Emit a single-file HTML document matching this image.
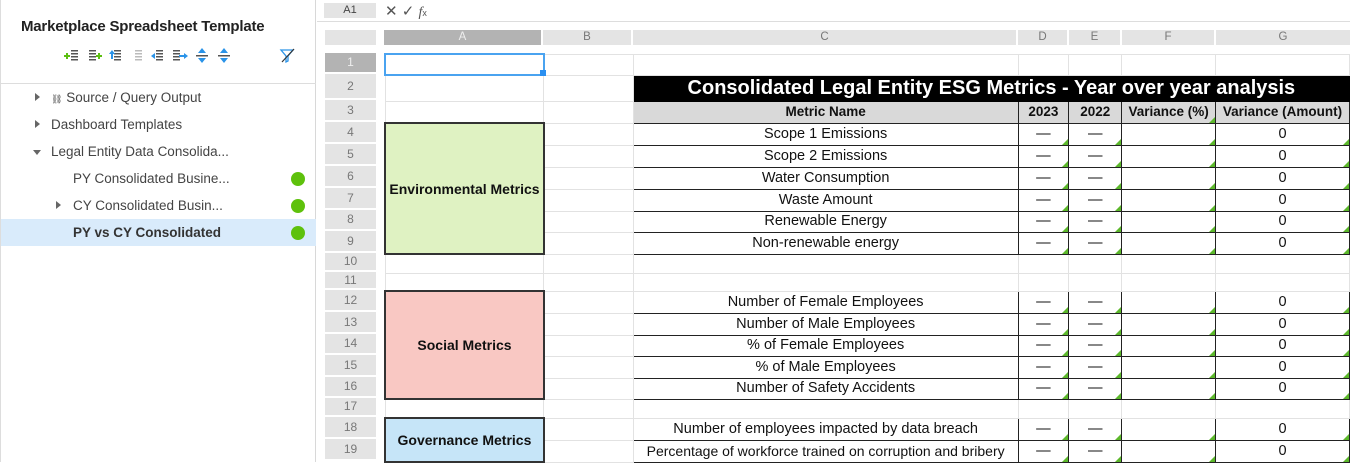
<!DOCTYPE html>
<html><head><meta charset="utf-8"><style>
*{margin:0;padding:0;box-sizing:border-box}
body{width:1350px;height:462px;overflow:hidden;background:#fff;font-family:"Liberation Sans",sans-serif;position:relative;color:#111}
.abs{position:absolute}
#side{left:0;top:0;width:316px;height:462px;border-right:1px solid #d8d8d8;border-left:1px solid #ddd}
.tr{position:absolute;font-size:13.5px;color:#444;white-space:nowrap}
.dot{position:absolute;left:290px;width:14px;height:14px;border-radius:50%;background:#5ec10c}
.car{position:absolute;width:0;height:0}
.rh{position:absolute;left:325px;width:51px;background:#e4e4e4;color:#777;font-size:12px;text-align:center;border-bottom:2px solid #fff}
.ch{position:absolute;top:30px;height:15px;background:#e4e4e4;color:#777;font-size:11.5px;text-align:center;line-height:15px;border-right:2px solid #fff}
table{position:absolute;left:384px;top:53px;border-collapse:collapse;table-layout:fixed}
td{border:1px solid #e2e2e2;font-size:14.5px;text-align:center;padding:0;white-space:nowrap;overflow:hidden;position:relative;line-height:1}
td.b{border:1px solid #222}
td.h{background:#d9d9d9;font-weight:bold;border:1px solid #222;font-size:13.5px}
td.t{background:#000;color:#fff;font-weight:bold;font-size:20px;border:1px solid #000}
td.g{background:#dff2c2;border:2px solid #333;font-weight:bold;font-size:14px}
td.p{background:#f9c8c3;border:2px solid #333;font-weight:bold;font-size:14px}
td.u{background:#c6e5f8;border:2px solid #333;font-weight:bold;font-size:14px}
td.k::after{content:"";position:absolute;right:0;bottom:0;border-left:6px solid transparent;border-bottom:6px solid #5cb82b}
</style></head><body>
<div id="side" class="abs">
<div class="abs" style="left:20px;top:18px;font-size:15px;color:#222;font-weight:bold;letter-spacing:-0.2px">Marketplace Spreadsheet Template</div>
<svg class="abs" style="left:62px;top:47px" width="240" height="18" viewBox="0 0 240 18">
<g fill="#555">
<rect x="8" y="3" width="7" height="1.5"/><rect x="8" y="6" width="7" height="1.5"/><rect x="8" y="9" width="7" height="1.5"/><rect x="8" y="12" width="7" height="1.5"/>
<rect x="26" y="3" width="7" height="1.5"/><rect x="26" y="6" width="7" height="1.5"/><rect x="26" y="9" width="7" height="1.5"/><rect x="26" y="12" width="7" height="1.5"/>
<rect x="51" y="3" width="7" height="1.5"/><rect x="51" y="6" width="7" height="1.5"/><rect x="51" y="9" width="7" height="1.5"/><rect x="51" y="12" width="7" height="1.5"/>
<rect x="93" y="3" width="7" height="1.5"/><rect x="93" y="6" width="7" height="1.5"/><rect x="93" y="9" width="7" height="1.5"/><rect x="93" y="12" width="7" height="1.5"/>
<rect x="110" y="3" width="7" height="1.5"/><rect x="110" y="6" width="7" height="1.5"/><rect x="110" y="9" width="7" height="1.5"/><rect x="110" y="12" width="7" height="1.5"/>
<rect x="133" y="8" width="12" height="1.5"/><rect x="155" y="8" width="12" height="1.5"/>
</g>
<g fill="#bbb"><rect x="72" y="3" width="7" height="1.5"/><rect x="72" y="6" width="7" height="1.5"/><rect x="72" y="9" width="7" height="1.5"/><rect x="72" y="12" width="7" height="1.5"/></g>
<g fill="#5cbf12"><rect x="1" y="8" width="6" height="2"/><rect x="3" y="6" width="2" height="6"/><rect x="33" y="8" width="6" height="2"/><rect x="35" y="6" width="2" height="6"/></g>
<g fill="#2a93e8"><path d="M46 7l3-4 3 4z"/><rect x="48" y="7" width="2" height="5"/><path d="M88 9l4-3v6z"/><path d="M125 9l-4-3v6z"/><rect x="116" y="8" width="6" height="2"/><path d="M135 6l4-5 4 5zM135 11l4 5 4-5z"/><path d="M157 6l4-5 4 5zM157 11l4 5 4-5z"/></g>
<g fill="none" stroke="#2a93e8" stroke-width="1.3"><path d="M218 3h12l-5 6v5l-2 1v-6z"/></g><path d="M219 15l12-13" stroke="#333" stroke-width="1.2"/>
</svg>
<div class="abs" style="left:0;top:83px;width:315px;height:1px;background:#ddd"></div>
<div class="car" style="left:34px;top:93px;border-left:5px solid #666;border-top:4px solid transparent;border-bottom:4px solid transparent"></div>
<div class="tr" style="left:50px;top:90px"><span style="font-size:9px">⛓</span> Source / Query Output</div>
<div class="car" style="left:34px;top:120px;border-left:5px solid #666;border-top:4px solid transparent;border-bottom:4px solid transparent"></div>
<div class="tr" style="left:50px;top:117px">Dashboard Templates</div>
<div class="car" style="left:32px;top:150px;border-top:5px solid #666;border-left:4px solid transparent;border-right:4px solid transparent"></div>
<div class="tr" style="left:50px;top:144px">Legal Entity Data Consolida...</div>
<div class="tr" style="left:72px;top:171px">PY Consolidated Busine...</div><div class="dot" style="top:172px"></div>
<div class="car" style="left:55px;top:201px;border-left:5px solid #666;border-top:4px solid transparent;border-bottom:4px solid transparent"></div>
<div class="tr" style="left:72px;top:198px">CY Consolidated Busin...</div><div class="dot" style="top:199px"></div>
<div class="abs" style="left:0;top:219px;width:315px;height:27px;background:#d9ebfb"></div>
<div class="tr" style="left:72px;top:225px;font-weight:bold;color:#333">PY vs CY Consolidated</div><div class="dot" style="top:226px"></div>
</div>
<div class="abs" style="left:324px;top:3px;width:52px;height:15px;background:#e4e4e4;font-size:11px;color:#444;text-align:center;line-height:15px">A1</div>
<div class="abs" style="left:385px;top:2px;font-size:15px;color:#555">✕ ✓ <i style="font-family:'Liberation Serif';font-size:14px">f</i><span style="font-size:9px">x</span></div>
<div class="abs" style="left:317px;top:21px;width:1033px;height:1px;background:#ddd"></div>
<div class="abs" style="left:325px;top:30px;width:51px;height:15px;background:#e4e4e4"></div>
<div class="ch" style="left:384px;width:159px;background:#b3b3b3;color:#eee">A</div>
<div class="ch" style="left:543px;width:90px">B</div>
<div class="ch" style="left:633px;width:385px">C</div>
<div class="ch" style="left:1018px;width:51px">D</div>
<div class="ch" style="left:1069px;width:53px">E</div>
<div class="ch" style="left:1122px;width:94px">F</div>
<div class="ch" style="left:1216px;width:134px;border:0">G</div>
<div class="rh" style="top:53px;height:21px;line-height:19px;background:#b3b3b3;color:#eee">1</div>
<div class="rh" style="top:74px;height:26px;line-height:24px">2</div>
<div class="rh" style="top:100px;height:22px;line-height:20px">3</div>
<div class="rh" style="top:122px;height:22px;line-height:20px">4</div>
<div class="rh" style="top:144px;height:22px;line-height:20px">5</div>
<div class="rh" style="top:166px;height:22px;line-height:20px">6</div>
<div class="rh" style="top:188px;height:22px;line-height:20px">7</div>
<div class="rh" style="top:210px;height:21px;line-height:19px">8</div>
<div class="rh" style="top:231px;height:22px;line-height:20px">9</div>
<div class="rh" style="top:253px;height:19px;line-height:17px">10</div>
<div class="rh" style="top:272px;height:18px;line-height:16px">11</div>
<div class="rh" style="top:290px;height:22px;line-height:20px">12</div>
<div class="rh" style="top:312px;height:22px;line-height:20px">13</div>
<div class="rh" style="top:334px;height:21px;line-height:19px">14</div>
<div class="rh" style="top:355px;height:22px;line-height:20px">15</div>
<div class="rh" style="top:377px;height:21px;line-height:19px">16</div>
<div class="rh" style="top:398px;height:19px;line-height:17px">17</div>
<div class="rh" style="top:417px;height:22px;line-height:20px">18</div>
<div class="rh" style="top:439px;height:22px;line-height:20px">19</div>
<table>
<colgroup><col style="width:159px"><col style="width:90px"><col style="width:385px"><col style="width:51px"><col style="width:53px"><col style="width:94px"><col style="width:134px"></colgroup>
<tr style="height:21px"><td style="border:2px solid #4aa3f0"></td><td></td><td></td><td></td><td></td><td></td><td></td></tr>
<tr style="height:26px"><td></td><td></td><td class="t" colspan="5">Consolidated Legal Entity ESG Metrics - Year over year analysis</td></tr>
<tr style="height:22px"><td></td><td></td><td class="h">Metric Name</td><td class="h">2023</td><td class="h">2022</td><td class="h k">Variance (%)</td><td class="h">Variance (Amount)</td></tr>
<tr style="height:22px"><td class="g" rowspan="6">Environmental Metrics</td><td></td><td class="b">Scope 1 Emissions</td><td class="b k">—</td><td class="b k">—</td><td class="b k"></td><td class="b k">0</td></tr>
<tr style="height:22px"><td></td><td class="b">Scope 2 Emissions</td><td class="b k">—</td><td class="b k">—</td><td class="b k"></td><td class="b k">0</td></tr>
<tr style="height:22px"><td></td><td class="b">Water Consumption</td><td class="b k">—</td><td class="b k">—</td><td class="b k"></td><td class="b k">0</td></tr>
<tr style="height:22px"><td></td><td class="b">Waste Amount</td><td class="b k">—</td><td class="b k">—</td><td class="b k"></td><td class="b k">0</td></tr>
<tr style="height:21px"><td></td><td class="b">Renewable Energy</td><td class="b k">—</td><td class="b k">—</td><td class="b k"></td><td class="b k">0</td></tr>
<tr style="height:22px"><td></td><td class="b">Non-renewable energy</td><td class="b k">—</td><td class="b k">—</td><td class="b k"></td><td class="b k">0</td></tr>
<tr style="height:19px"><td></td><td></td><td></td><td></td><td></td><td></td><td></td></tr>
<tr style="height:18px"><td></td><td></td><td></td><td></td><td></td><td></td><td></td></tr>
<tr style="height:22px"><td class="p" rowspan="5">Social Metrics</td><td></td><td class="b">Number of Female Employees</td><td class="b k">—</td><td class="b k">—</td><td class="b k"></td><td class="b k">0</td></tr>
<tr style="height:22px"><td></td><td class="b">Number of Male Employees</td><td class="b k">—</td><td class="b k">—</td><td class="b k"></td><td class="b k">0</td></tr>
<tr style="height:21px"><td></td><td class="b">% of Female Employees</td><td class="b k">—</td><td class="b k">—</td><td class="b k"></td><td class="b k">0</td></tr>
<tr style="height:22px"><td></td><td class="b">% of Male Employees</td><td class="b k">—</td><td class="b k">—</td><td class="b k"></td><td class="b k">0</td></tr>
<tr style="height:21px"><td></td><td class="b">Number of Safety Accidents</td><td class="b k">—</td><td class="b k">—</td><td class="b k"></td><td class="b k">0</td></tr>
<tr style="height:19px"><td></td><td></td><td></td><td></td><td></td><td></td><td></td></tr>
<tr style="height:22px"><td class="u" rowspan="2">Governance Metrics</td><td></td><td class="b">Number of employees impacted by data breach</td><td class="b k">—</td><td class="b k">—</td><td class="b k"></td><td class="b k">0</td></tr>
<tr style="height:22px"><td></td><td class="b" style="font-size:14px">Percentage of workforce trained on corruption and bribery</td><td class="b k">—</td><td class="b k">—</td><td class="b k"></td><td class="b k">0</td></tr>
</table>
<div class="abs" style="left:540px;top:70px;width:6px;height:6px;background:#2a8ff0"></div>
</body></html>
